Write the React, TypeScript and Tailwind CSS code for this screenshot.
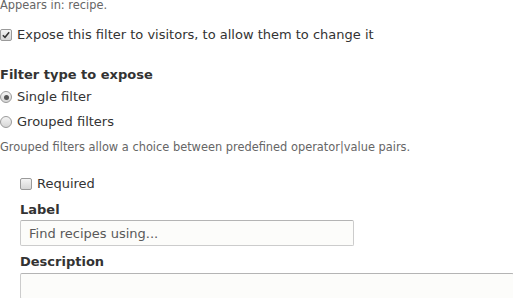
import React from "react";

const font = { fontFamily: '"DejaVu Sans", Verdana, sans-serif' };

function Check({ checked }: { checked?: boolean }) {
  return (
    <span className="relative inline-flex h-[12px] w-[12px] shrink-0 items-center justify-center rounded-[2px] border border-[#9a9a9a] bg-gradient-to-b from-[#f4f4f4] to-[#d6d6d6]">
      {checked && (
        <svg viewBox="0 0 12 12" className="h-[10px] w-[10px]">
          <path d="M2.2 6.2 L4.8 8.8 L9.8 2.6" fill="none" stroke="#333" strokeWidth="1.8" />
        </svg>
      )}
    </span>
  );
}

function Radio({ checked }: { checked?: boolean }) {
  return (
    <span className="inline-flex h-[12px] w-[12px] shrink-0 items-center justify-center rounded-full border border-[#9a9a9a] bg-gradient-to-b from-[#f4f4f4] to-[#d6d6d6]">
      {checked && <span className="h-[5px] w-[5px] rounded-full bg-[#555]" />}
    </span>
  );
}

export default function App() {
  return (
    <div className="h-[298px] w-[513px] overflow-hidden bg-white text-[#333]" style={font}>
      <div className="-mt-[2px] text-[11.4px] leading-[14px] text-[#666]">Appears in: recipe.</div>

      <label className="mt-[15px] flex items-center gap-[5px] text-[13px] leading-[16px]">
        <Check checked />
        <span>Expose this filter to visitors, to allow them to change it</span>
      </label>

      <div className="mt-[24px] text-[13px] font-bold leading-[16px]">Filter type to expose</div>
      <div className="mt-[6px] flex items-center gap-[5px] text-[13px] leading-[16px]">
        <Radio checked />
        <span>Single filter</span>
      </div>
      <div className="mt-[9px] flex items-center gap-[5px] text-[13px] leading-[16px]">
        <Radio />
        <span>Grouped filters</span>
      </div>
      <div className="mt-[10px] text-[11.4px] leading-[14px] text-[#666]">
        Grouped filters allow a choice between predefined operator|value pairs.
      </div>

      <div className="pl-[20px]">
        <label className="mt-[22px] flex items-center gap-[5px] text-[13px] leading-[16px]">
          <Check />
          <span>Required</span>
        </label>
        <div className="mt-[10px] text-[13px] font-bold leading-[16px]">Label</div>
        <input
          readOnly
          value="Find recipes using..."
          className="mt-[2px] h-[26px] w-[334px] rounded-[2px] border border-[#ccc] border-t-[#b4b4b4] bg-[#fcfcfa] px-[8px] text-[13px] text-[#595959] outline-none"
          style={font}
        />
        <div className="mt-[8px] text-[13px] font-bold leading-[16px]">Description</div>
        <input
          readOnly
          className="mt-[3px] h-[26px] w-[494px] rounded-[2px] border border-[#ccc] border-t-[#b4b4b4] bg-[#fcfcfa] px-[8px] text-[13px] outline-none"
          style={font}
        />
      </div>
    </div>
  );
}
